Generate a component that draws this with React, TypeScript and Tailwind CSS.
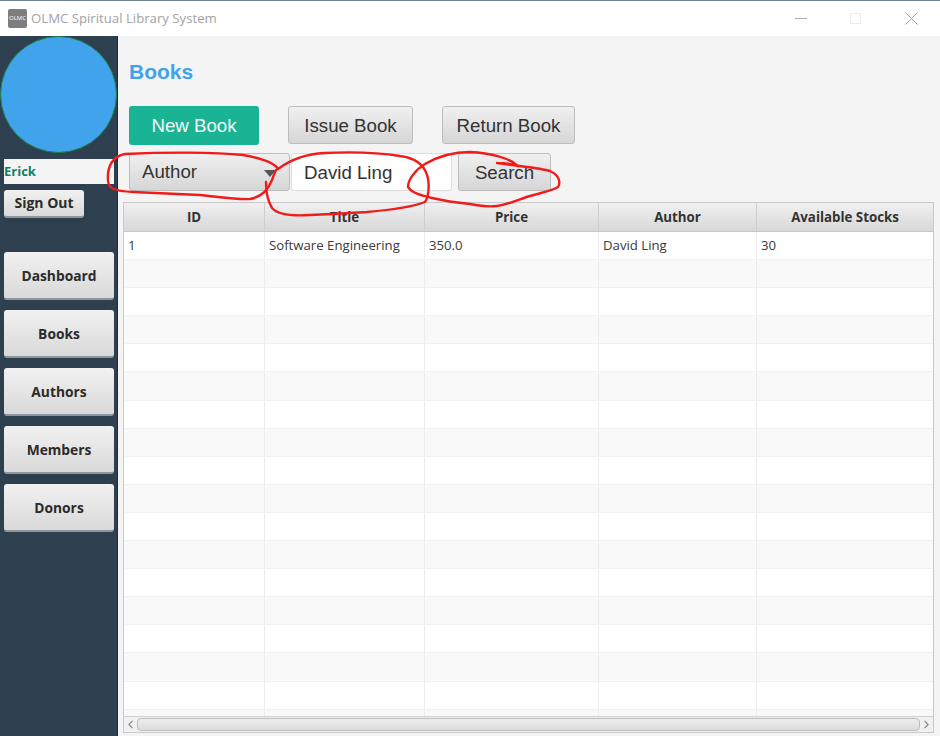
import { ChevronLeft, ChevronRight } from "lucide-react"

const columns = ["ID", "Title", "Price", "Author", "Available Stocks"]
const firstRow = ["1", "Software Engineering", "350.0", "David Ling", "30"]
const sideItems = ["Dashboard", "Books", "Authors", "Members", "Donors"]
const fxButton = "border border-[#bdbdbd] bg-gradient-to-b from-[#f0f0f0] to-[#d6d6d6] rounded-[3px] text-[#333333]"
const rowGrid = "grid grid-cols-[141px_160px_174px_158px_1fr]"

function SideButton({ label }: { label: string }) {
  return (
    <button className="w-[110px] h-[48px] ml-1 pt-[2px] rounded-[3px] border-b-2 border-[#8f979e] bg-gradient-to-b from-[#f1f1f1] to-[#d9d9d9] text-[13.8px] font-bold text-[#2b2b2b] font-['Open_Sans',sans-serif]">
      {label}
    </button>
  )
}

function Scribbles() {
  return (
    <svg className="absolute left-0 top-0 pointer-events-none" width="940" height="736" fill="none" stroke="#f01c1c" strokeWidth="2.4" strokeLinecap="round" strokeLinejoin="round">
      <path d="M278 169 C274 162 260 158 243 155 C215 152 165 152 125 154 C113 156 107 166 108 180 C108 189 115 191 133 192 C160 193 180 194 200 195 C220 197 238 200 250 199 C262 197 268 190 272 180 C274 174 275 172 276 170" />
      <path d="M266 182 C266 192 267 200 272 208 C278 215 295 216 310 215 C335 214 350 213 367 212 C390 210 415 206 425 202 C430 195 429 180 427 175 C424 165 416 158 400 156 C375 152 345 152 325 153 C305 154 290 160 278 169" />
      <path d="M497 163 C505 163 512 164 518 166 C510 158 490 153 470 152 C450 152 437 157 425 164 C415 170 408 180 408 187 C412 193 420 195 432 198 C445 201 460 203 470 204 C480 206 490 207 497 206 C510 204 520 199 530 196 C540 193 552 191 558 187 C561 182 559 175 550 171 C540 168 525 167 497 163" />
    </svg>
  )
}

export default function App() {
  return (
    <div className="relative w-[940px] h-[736px] overflow-hidden flex flex-col bg-[#f4f4f4] font-['Open_Sans',sans-serif]">
      <div className="h-[36px] shrink-0 bg-white border-t border-[#6d8294] flex items-center">
        <div className="ml-2 w-[19px] h-[19px] rounded-[2px] bg-[#7e7e7e] flex items-center justify-center text-[6px] text-white overflow-hidden">OLMC</div>
        <span className="ml-[4px] text-[13.2px] text-[#a3a3a3]">OLMC Spiritual Library System</span>
        <div className="ml-auto flex items-center mr-[22px]">
          <div className="w-[12px] h-px bg-[#b0b0b0] mr-[43px]" />
          <div className="w-[11px] h-[11px] border border-[#ececec] mr-[44px]" />
          <svg width="13" height="13" viewBox="0 0 13 13" stroke="#a8a8a8" strokeWidth="1">
            <path d="M0.5 0.5 L12.5 12.5 M12.5 0.5 L0.5 12.5" />
          </svg>
        </div>
      </div>

      <div className="flex-1 flex min-h-0">
        <aside className="w-[118px] shrink-0 bg-[#2e3f50] border-r border-[#1f2b36] flex flex-col">
          <div className="w-[117px] h-[117px] rounded-full bg-[#41a3ec] border border-[#17803a]" />
          <div className="mt-[6px] ml-[4px] w-[110px] h-[25px] bg-[#f4f4f4] flex items-center text-[13px] font-bold text-[#0c8068]">Erick</div>
          <button className="mt-[6px] ml-[4px] w-[80px] h-[28px] pb-px rounded-[3px] border-b-2 border-[#8f979e] bg-gradient-to-b from-[#f1f1f1] to-[#d9d9d9] text-[14px] font-bold text-[#2b2b2b]">Sign Out</button>
          <div className="mt-[34px] flex flex-col gap-[10px]">
            {sideItems.map((label) => (
              <SideButton key={label} label={label} />
            ))}
          </div>
        </aside>

        <main className="flex-1 flex flex-col min-w-0">
          <h1 className="mt-[22px] ml-[11px] h-[28px] leading-[28px] text-[21px] font-bold text-[#3fa3ec] font-['Liberation_Sans',sans-serif]">Books</h1>
          <div className="mt-[20px] ml-[11px] flex items-start font-['Liberation_Sans',sans-serif] text-[18.7px]">
            <button className="w-[130px] h-[39px] pt-px rounded-[3px] bg-[#1ab394] text-[#f2fbf8]">New Book</button>
            <button className={`ml-[29px] w-[125px] h-[38px] pt-[2px] ${fxButton}`}>Issue Book</button>
            <button className={`ml-[29px] w-[133px] h-[38px] pt-[2px] ${fxButton}`}>Return Book</button>
          </div>
          <div className="mt-[8px] ml-[11px] flex items-center font-['Liberation_Sans',sans-serif] text-[18.7px] text-[#333333]">
            <div className={`relative w-[161px] h-[38px] flex items-center pl-[12px] pt-px ${fxButton}`}>
              Author
              <span className="absolute right-[13px] top-[16px] w-0 h-0 border-x-[6px] border-x-transparent border-t-[7px] border-t-[#555555]" />
            </div>
            <div className="ml-px w-[161px] h-[38px] pt-[2px] bg-white border border-[#dddddd] rounded-[3px] flex items-center pl-[12px]">David Ling</div>
            <button className={`ml-[6px] w-[93px] h-[38px] pt-[2px] ${fxButton}`}>Search</button>
          </div>

          <div className="mt-[11px] ml-[5px] w-[811px] h-[531px] border border-[#c9c9c9] flex flex-col bg-white overflow-hidden">
            <div className={`${rowGrid} h-[29px] shrink-0 bg-gradient-to-b from-[#f0f0f0] to-[#d8d8d8] border-b border-[#c8c8c8]`}>
              {columns.map((c) => (
                <div key={c} className="flex items-center justify-center pt-px border-r border-[#cfcfcf] last:border-r-0 text-[13.3px] font-bold text-[#333333]">{c}</div>
              ))}
            </div>
            <div className="flex-1 min-h-0 overflow-hidden">
              {Array.from({ length: 18 }).map((_, i) => (
                <div key={i} className={`${rowGrid} h-[28.1px] border-b border-[#f1f1f1] ${i % 2 === 0 ? "bg-white" : "bg-[#f9f9f9]"}`}>
                  {columns.map((c, j) => (
                    <div key={c} className="flex items-center pl-[4px] pt-px border-r border-[#ececec] last:border-r-0 text-[13.2px] text-[#3a3a3a]">
                      {i === 0 ? firstRow[j] : ""}
                    </div>
                  ))}
                </div>
              ))}
            </div>
            <div className="h-[16px] shrink-0 bg-[#f0f0f0] border-t border-[#d0d0d0] flex items-center">
              <ChevronLeft className="w-[13px] h-[13px] text-[#888888]" strokeWidth={2} />
              <div className="flex-1 h-[13px] rounded-[4px] border border-[#bcbcbc] bg-gradient-to-b from-[#eeeeee] to-[#dcdcdc]" />
              <ChevronRight className="w-[13px] h-[13px] text-[#888888]" strokeWidth={2} />
            </div>
          </div>
        </main>
      </div>
      <Scribbles />
    </div>
  )
}
